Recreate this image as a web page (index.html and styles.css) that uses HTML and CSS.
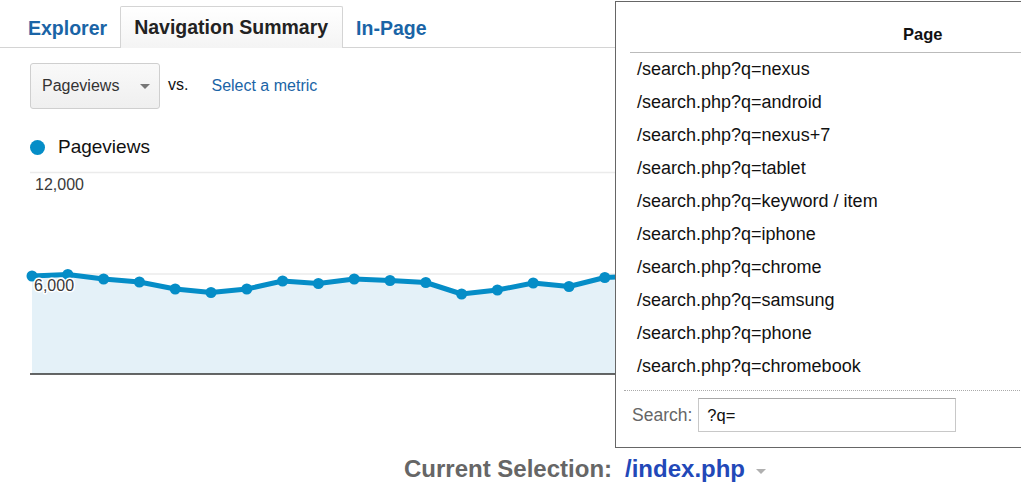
FILE: index.html
```html
<!DOCTYPE html>
<html>
<head>
<meta charset="utf-8">
<link rel="stylesheet" href="styles.css">
</head>
<body>
<div class="page">
  <div class="tabs">
    <div class="tab">Explorer</div>
    <div class="tab active">Navigation Summary</div>
    <div class="tab">In-Page</div>
  </div>

  <div class="toolbar">
    <div class="select">
      <span>Pageviews</span>
      <span class="caret"></span>
    </div>
    <span class="vs">vs.</span>
    <a class="metric">Select a metric</a>
  </div>

  <div class="legend">
    <span class="dot"></span>
    <span>Pageviews</span>
  </div>

  <div class="chart">
    <svg width="991" height="212" viewBox="0 0 991 212">
      <line x1="0" y1="6.5" x2="991" y2="6.5" stroke="#ebebeb" stroke-width="1.5"/>
      <line x1="0" y1="108" x2="991" y2="108" stroke="#ebebeb" stroke-width="1.5"/>
      <path d="M2,110 L37.8,108.5 L73.6,113 L109.4,116 L145.2,123 L181,126.5 L216.8,123 L252.6,115 L288.4,117.5 L324.2,113 L360,114.5 L395.8,116.5 L431.6,128 L467.4,124 L503.2,117 L539,120.5 L574.8,111.5 L610.6,110 L646.4,112 L682.2,111 L718,113 L753.8,112 L789.6,110 L825.4,113 L861.2,111 L897,112 L932.8,110 L968.6,112 L991,112 L991,208 L2,208 Z" fill="#e4f1f8"/>
      <text class="axis-label" x="5" y="24">12,000</text>
      <polyline fill="none" stroke="#058dc7" stroke-width="5" stroke-linejoin="round" points="2,110 37.8,108.5 73.6,113 109.4,116 145.2,123 181,126.5 216.8,123 252.6,115 288.4,117.5 324.2,113 360,114.5 395.8,116.5 431.6,128 467.4,124 503.2,117 539,120.5 574.8,111.5 610.6,110 646.4,112 682.2,111 718,113 753.8,112 789.6,110 825.4,113 861.2,111 897,112 932.8,110 968.6,112 991,112"/>
      <g fill="#058dc7">
        <circle cx="2" cy="110" r="5.5"/>
        <circle cx="37.8" cy="108.5" r="5.5"/>
        <circle cx="73.6" cy="113" r="5.5"/>
        <circle cx="109.4" cy="116" r="5.5"/>
        <circle cx="145.2" cy="123" r="5.5"/>
        <circle cx="181" cy="126.5" r="5.5"/>
        <circle cx="216.8" cy="123" r="5.5"/>
        <circle cx="252.6" cy="115" r="5.5"/>
        <circle cx="288.4" cy="117.5" r="5.5"/>
        <circle cx="324.2" cy="113" r="5.5"/>
        <circle cx="360" cy="114.5" r="5.5"/>
        <circle cx="395.8" cy="116.5" r="5.5"/>
        <circle cx="431.6" cy="128" r="5.5"/>
        <circle cx="467.4" cy="124" r="5.5"/>
        <circle cx="503.2" cy="117" r="5.5"/>
        <circle cx="539" cy="120.5" r="5.5"/>
        <circle cx="574.8" cy="111.5" r="5.5"/>
        <circle cx="610.6" cy="110" r="5.5"/>
      </g>
      <text class="axis-label halo" x="4" y="125">6,000</text>
      <line x1="0" y1="208" x2="991" y2="208" stroke="#333" stroke-width="1.5"/>
    </svg>
  </div>

  <div class="selection">
    <span class="sel-label">Current Selection:</span>
    <span class="sel-value">/index.php</span>
    <span class="sel-caret"></span>
  </div>

  <div class="popup">
    <div class="popup-head">Page</div>
    <ul class="rows">
      <li>/search.php?q=nexus</li>
      <li>/search.php?q=android</li>
      <li>/search.php?q=nexus+7</li>
      <li>/search.php?q=tablet</li>
      <li>/search.php?q=keyword / item</li>
      <li>/search.php?q=iphone</li>
      <li>/search.php?q=chrome</li>
      <li>/search.php?q=samsung</li>
      <li>/search.php?q=phone</li>
      <li>/search.php?q=chromebook</li>
    </ul>
    <div class="search">
      <span class="search-label">Search:</span>
      <div class="search-input">?q=</div>
    </div>
  </div>
</div>
</body>
</html>
```

FILE: styles.css
```css
html, body {
  margin: 0;
  padding: 0;
  background: #fff;
  overflow: hidden;
}

body {
  font-family: "Liberation Sans", Arial, sans-serif;
  width: 1021px;
  height: 486px;
}

.page {
  position: relative;
  width: 1021px;
  height: 486px;
}

/* Tabs */
.tabs {
  display: flex;
  padding: 6px 0 0 15px;
  height: 41px;
  border-bottom: 1px solid #d4d4d4;
}

.tab {
  display: flex;
  align-items: center;
  padding: 1px 12px 0 12px;
  height: 40px;
  font-size: 19.5px;
  font-weight: bold;
  color: #1a64a6;
  border: 1px solid transparent;
  border-bottom: none;
}

.tab.active {
  color: #222;
  background: linear-gradient(#ffffff, #f4f4f4);
  border-color: #d4d4d4;
  border-radius: 2px 2px 0 0;
  height: 41px;
  margin-bottom: -1px;
  padding: 0 14px 0 13px;
}

/* Toolbar */
.toolbar {
  display: flex;
  align-items: center;
  padding: 15px 0 0 30px;
  height: 46px;
}

.select {
  display: flex;
  align-items: center;
  box-sizing: border-box;
  width: 130px;
  height: 46px;
  padding: 0 0 0 11px;
  border: 1px solid #cfcfcf;
  border-radius: 3px;
  background: linear-gradient(#f9f9f9, #efefef);
  font-size: 16px;
  color: #333;
}

.caret {
  width: 0;
  height: 0;
  margin-left: 21px;
  border-left: 5.5px solid transparent;
  border-right: 5.5px solid transparent;
  border-top: 5.5px solid #777;
}

.vs {
  margin-left: 8px;
  font-size: 16px;
  color: #111;
  position: relative;
  top: -1px;
}

.metric {
  margin-left: 23px;
  font-size: 16px;
  color: #1a64a6;
}

/* Legend */
.legend {
  display: flex;
  align-items: center;
  padding: 0 0 0 30px;
  margin-top: 23px;
  height: 30px;
  font-size: 19px;
  color: #111;
}

.dot {
  width: 15px;
  height: 15px;
  border-radius: 50%;
  background: #058dc7;
  margin-right: 13px;
}

/* Chart */
.chart {
  margin: 4px 0 0 30px;
  height: 212px;
}

.chart svg {
  display: block;
  overflow: visible;
}

.axis-label {
  font-family: "Liberation Sans", Arial, sans-serif;
  font-size: 16px;
  fill: #3a3a3a;
}

.halo {
  stroke: #fff;
  stroke-width: 3px;
  paint-order: stroke;
  stroke-linejoin: round;
}

/* Current selection */
.selection {
  display: flex;
  align-items: center;
  padding: 0 0 0 404px;
  margin-top: 77px;
  font-size: 24px;
  font-weight: bold;
}

.sel-label {
  color: #666;
}

.sel-value {
  margin-left: 13px;
  color: #2248b8;
}

.sel-caret {
  width: 0;
  height: 0;
  margin-left: 11px;
  margin-top: 5px;
  border-left: 5.5px solid transparent;
  border-right: 5.5px solid transparent;
  border-top: 5.5px solid #b0b0b0;
}

/* Popup */
.popup {
  position: absolute;
  left: 615px;
  top: 1px;
  width: 420px;
  height: 445px;
  background: #fff;
  border: 1px solid #666;
  box-sizing: content-box;
}

.popup-head {
  margin-left: 14px;
  height: 51px;
  border-bottom: 1px solid #bbb;
  display: flex;
  align-items: flex-end;
  padding: 0 0 8px 273px;
  box-sizing: border-box;
  font-size: 16.5px;
  font-weight: bold;
  color: #111;
}

.rows {
  list-style: none;
  margin: 0;
  padding: 0 0 7px 0;
  border-bottom: 1px dotted #aaa;
  margin-left: 8px;
}

.rows li {
  height: 33px;
  line-height: 33px;
  padding-left: 13px;
  font-size: 18px;
  color: #111;
  white-space: nowrap;
}

.search {
  display: flex;
  align-items: center;
  padding: 7px 0 0 16px;
}

.search-label {
  font-size: 17.5px;
  color: #666;
}

.search-input {
  margin-left: 6px;
  box-sizing: border-box;
  width: 258px;
  height: 34px;
  border: 1px solid #c8c8c8;
  border-top-color: #a8a8a8;
  padding: 0 0 0 8px;
  display: flex;
  align-items: center;
  font-size: 16.5px;
  color: #111;
}
```
